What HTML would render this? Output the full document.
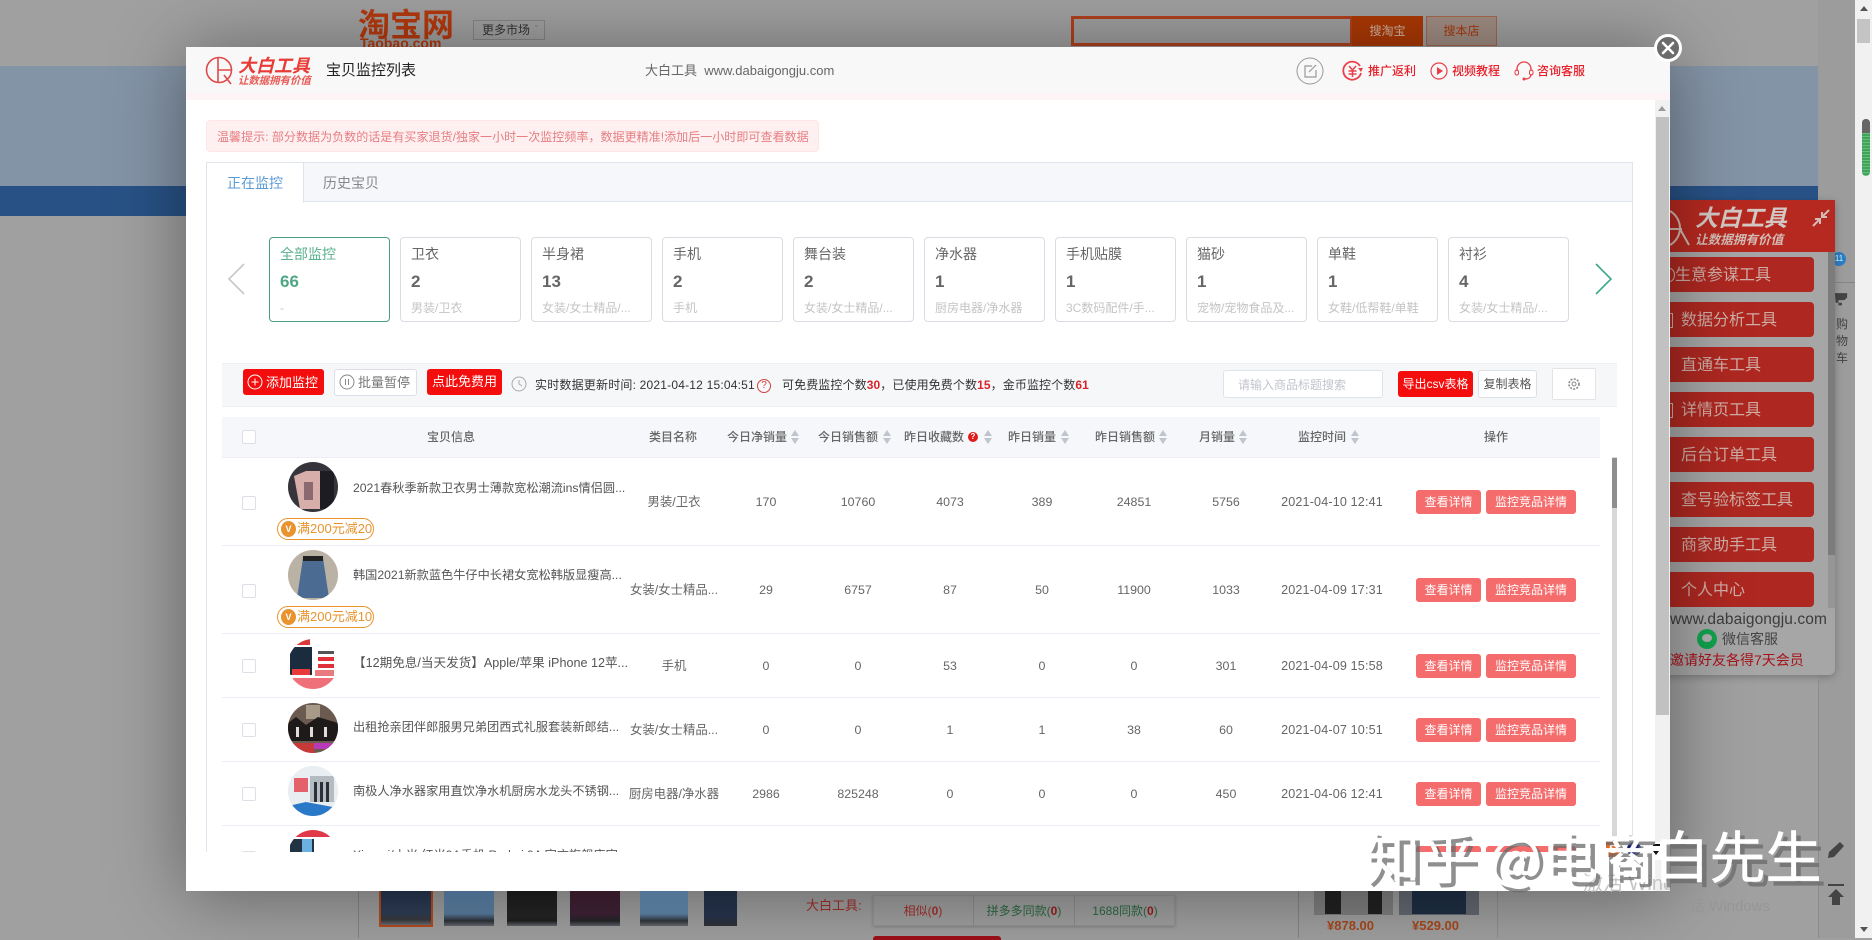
<!DOCTYPE html>
<html lang="zh-CN">
<head>
<meta charset="utf-8">
<title>宝贝监控列表</title>
<style>
*{box-sizing:border-box}
html,body{margin:0;padding:0;width:1872px;height:938px;overflow:hidden;background:#a0a0a0;font-family:"Liberation Sans","Noto Sans CJK SC",sans-serif;font-size:12px;color:#555}
div,span,svg{position:absolute;white-space:nowrap}
b{font-weight:700}
.card{top:237px;width:121px;height:85px;background:#fff;border:1px solid #d9dce2;border-radius:4px}
.card .n{left:10px;top:7px;font-size:14px;line-height:18px;color:#666}
.card .v{left:10px;top:33px;font-size:17px;line-height:22px;font-weight:700;color:#666}
.card .s{left:10px;top:62px;font-size:12px;line-height:17px;color:#c4c4c4}
.th{top:417px;height:40px;line-height:40px;font-size:12px;color:#666;text-align:center;font-weight:500}
.sort{width:8px;height:14px}
.r{left:222px;width:1378px;border-bottom:1px solid #ebeef5;background:#fff}
.cb{left:20px;width:14px;height:14px;border:1px solid #dcdfe6;background:#fff;border-radius:2px}
.img{left:66px;width:50px;height:50px;border-radius:50%;overflow:hidden;background:#eee}
.img svg{left:0;top:0}
.t{left:131px;font-size:12.200px;line-height:18px;color:#555}
.cell{text-align:center;color:#666;font-size:12.400px;line-height:18px;width:120px}
.c7{left:1020px;width:180px;font-size:12.600px;letter-spacing:.15px}
.b1,.b2{height:24px;line-height:24px;background:#f56c6c;color:#fff;border-radius:3px;text-align:center;font-size:12px}
.b1{left:1194px;width:65px}
.b2{left:1264px;width:90px}
.cp{left:55px;width:97px;height:22px;border:1px solid #e8932e;border-radius:11px;background:#fff;color:#e8932e;font-size:13px;line-height:20px;padding-left:19px}
.cp i{position:absolute;left:3px;top:2px;width:15px;height:16px;border-radius:50%;background:#e8932e;color:#fff;font-size:9px;line-height:16px;text-align:center;font-style:normal;font-weight:700}
.mb{left:1620px;width:194px;height:35px;background:#ae2821;border-radius:4px;color:#cfaea6;font-size:16px;line-height:37px}
.thumb{top:891px;height:35px;background:linear-gradient(180deg,#2f4260 0,#3a4a62 60%,#5f6570 100%)}
</style>
</head>
<body>
<!-- page behind -->
<div style="left:0;top:66px;width:1818px;height:120px;background:#8494a7"></div>
<div style="left:0;top:186px;width:1818px;height:30px;background:#285286"></div>
<div style="left:1818px;top:0;width:37px;height:938px;background:#9c9c9c"></div>
<div style="left:1855px;top:0;width:17px;height:938px;background:#f1f1f1"></div>
<div style="left:1857px;top:19px;width:13px;height:24px;background:#c4c4c4"></div>
<div style="left:1860px;top:6px;width:0;height:0;border:4px solid transparent;border-bottom:5px solid #555;border-top:0"></div>
<div style="left:1860px;top:927px;width:0;height:0;border:4px solid transparent;border-top:5px solid #555;border-bottom:0"></div>
<div style="left:1862px;top:119px;width:8px;height:57px;border-radius:4px;background:repeating-linear-gradient(180deg,#3fa55a 0,#3fa55a 2px,#69bb7f 2px,#69bb7f 3px)"></div>
<div style="left:1862px;top:119px;width:8px;height:14px;border-radius:4px 4px 0 0;background:#666"></div>

<!-- taobao header -->
<div style="left:358px;top:5px;font-size:32px;line-height:36px;font-weight:700;color:#b3390e;font-family:'Noto Sans CJK SC',sans-serif">淘宝网</div>
<div style="left:360px;top:36px;font-size:14px;line-height:14px;font-weight:700;color:#b3390e">Taobao.com</div>
<div style="left:473px;top:20px;width:72px;height:20px;border:1px solid #858585;color:#333;font-size:12px;line-height:18px;padding-left:8px">更多市场<span style="left:61px;top:-1px;font-size:9px;color:#666">ˇ</span></div>
<div style="left:1071px;top:16px;width:282px;height:30px;border:3px solid #b0401c;background:#9e9e9e"></div>
<div style="left:1352px;top:16px;width:71px;height:30px;background:#ab3804;color:#d4b8a6;text-align:center;line-height:30px">搜淘宝</div>
<div style="left:1426px;top:16px;width:71px;height:30px;background:#a08d83;border:1px solid #a5664b;color:#a8380c;text-align:center;line-height:28px">搜本店</div>

<!-- product page bottom -->
<div style="left:358px;top:891px;width:1px;height:47px;background:#858585"></div>
<div style="left:1298px;top:891px;width:1px;height:47px;background:#858585"></div>
<div style="left:1497px;top:891px;width:1px;height:47px;background:#8f8f8f"></div>
<div style="left:1818px;top:680px;width:1px;height:258px;background:#8d8d8d"></div>
<div class="thumb" style="left:379px;width:54px;height:36px;border:2px solid #b84a1c;border-top:0;background:linear-gradient(180deg,#26354f 0,#2f3e57 65%,#3a3a3e 85%,#6a6e76 100%)"></div>
<div class="thumb" style="left:444px;width:50px;background:linear-gradient(180deg,#5f88b2,#5a7ea0 65%,#2e3238 85%,#666a70)"></div>
<div class="thumb" style="left:507px;width:50px;background:linear-gradient(180deg,#1e1e1e,#252525 70%,#202020 85%,#63676c)"></div>
<div class="thumb" style="left:570px;width:50px;background:linear-gradient(180deg,#432033,#3f2236 65%,#252528 85%,#5f6168)"></div>
<div class="thumb" style="left:640px;width:48px;background:linear-gradient(180deg,#6a96c0,#6088ad 65%,#33373c 85%,#666a70)"></div>
<div class="thumb" style="left:704px;width:33px;background:linear-gradient(180deg,#24334b,#26354e 70%,#303236)"></div>
<div style="left:806px;top:897px;font-size:13px;line-height:18px;color:#a0302a">大白工具:</div>
<div style="left:873px;top:895px;width:302px;height:31px;border:1px solid #969696;background:#a0a0a0;box-shadow:0 1px 3px rgba(0,0,0,.2)"></div>
<div style="left:973px;top:895px;width:1px;height:31px;background:#8e8e8e"></div>
<div style="left:1074px;top:895px;width:1px;height:31px;background:#8e8e8e"></div>
<div style="left:873px;top:902px;width:100px;text-align:center;font-size:12px;line-height:18px;color:#a3302c">相似(<b>0</b>)</div>
<div style="left:974px;top:902px;width:100px;text-align:center;font-size:12px;line-height:18px;color:#2b6a42">拼多多同款(<b style="color:#9c1a1a">0</b>)</div>
<div style="left:1075px;top:902px;width:100px;text-align:center;font-size:12px;line-height:18px;color:#2b6a42">1688同款(<b style="color:#9c1a1a">0</b>)</div>
<div style="left:873px;top:936px;width:128px;height:4px;background:#a0101a;border-radius:3px 3px 0 0"></div>
<div style="left:1314px;top:891px;width:79px;height:24px;background:#808080"></div>
<div style="left:1325px;top:891px;width:16px;height:23px;background:#222"></div>
<div style="left:1368px;top:891px;width:14px;height:23px;background:#222"></div>
<div style="left:1399px;top:891px;width:80px;height:24px;background:#646a72"></div>
<div style="left:1412px;top:891px;width:54px;height:23px;background:#1f2f45"></div>
<div style="left:1327px;top:918px;font-size:13px;line-height:16px;font-weight:700;color:#a8481c">¥878.00</div>
<div style="left:1412px;top:918px;font-size:13px;line-height:16px;font-weight:700;color:#a8481c">¥529.00</div>

<!-- right side tools behind -->
<div style="left:1832px;top:252px;width:14px;height:14px;border-radius:50%;background:#2e7cc4;color:#cfe;font-size:8px;line-height:14px;text-align:center">11</div>
<div style="left:1835px;top:282px;width:20px;height:1px;background:#858585"></div>
<svg style="left:1834px;top:292px" width="14" height="18" viewBox="0 0 16 20"><path d="M1 1h14v5l-3 3H5v3H2z" fill="#444"/><rect x="5" y="12" width="4" height="3" fill="#444"/></svg>
<div style="left:1836px;top:316px;width:14px;font-size:12px;line-height:17px;white-space:normal;color:#444">购物车</div>
<svg style="left:1826px;top:840px" width="20" height="20" viewBox="0 0 20 20"><path d="M14 2l4 4-10 11-6 1 1-6z" fill="#444"/></svg>
<svg style="left:1827px;top:884px" width="18" height="22" viewBox="0 0 18 22"><rect x="1" y="0" width="16" height="2" fill="#444"/><path d="M9 5l8 8h-4v8H5v-8H1z" fill="#444"/></svg>

<!-- right tool panel -->
<div style="left:1600px;top:200px;width:235px;height:475px;background:#a6a6a6;border-radius:0 0 6px 0;box-shadow:0 2px 8px rgba(0,0,0,.25)"></div>
<div style="left:1828px;top:252px;width:7px;height:356px;background:#969696"></div>
<div style="left:1828px;top:252px;width:7px;height:303px;background:#7c7c7c"></div>
<div style="left:1600px;top:200px;width:235px;height:52px;background:#b62920"></div>
<div style="left:1695px;top:204px;font-size:23px;line-height:28px;font-weight:700;font-style:italic;color:#d2c8c4">大白工具</div>
<div style="left:1695px;top:232px;font-size:12.600px;line-height:16px;font-weight:700;font-style:italic;color:#d2bcb5">让数据拥有价值</div>
<svg style="left:1668px;top:205px" width="24" height="44" viewBox="0 0 24 44"><path d="M2 6a20 20 0 0 1 10 18 20 20 0 0 1-10 16M2 24h12M12 24l9 16" fill="none" stroke="#d2b8b0" stroke-width="2"/></svg>
<svg style="left:1811px;top:208px" width="20" height="20" viewBox="0 0 20 20"><path d="M18 2l-7 7M11 4v5h5M2 18l7-7M4 11h5v5" fill="none" stroke="#d2bcb6" stroke-width="2"/></svg>
<div class="mb" style="top:257px;padding-left:55px">生意参谋工具</div>
<div class="mb" style="top:302px;padding-left:61px">数据分析工具</div>
<div class="mb" style="top:347px;padding-left:61px">直通车工具</div>
<div class="mb" style="top:392px;padding-left:61px">详情页工具</div>
<div class="mb" style="top:437px;padding-left:61px">后台订单工具</div>
<div class="mb" style="top:482px;padding-left:61px">查号验标签工具</div>
<div class="mb" style="top:527px;padding-left:61px">商家助手工具</div>
<div class="mb" style="top:572px;padding-left:61px">个人中心</div>
<div style="left:1664px;top:268px;width:11px;height:14px;border:1.500px solid #cfaea6;border-radius:50%"></div>
<div style="left:1664px;top:313px;width:9px;height:15px;border:1.500px solid #cfaea6"></div>
<div style="left:1664px;top:403px;width:9px;height:15px;border:1.500px solid #cfaea6"></div>
<div style="left:1670px;top:610px;font-size:15.500px;line-height:20px;color:#3c3c3c;letter-spacing:.1px">www.dabaigongju.com</div>
<div style="left:1697px;top:629px;width:20px;height:20px;border-radius:50%;background:#12a24e"></div>
<div style="left:1702px;top:634px;width:10px;height:8px;border-radius:50%;background:#b0b0b0"></div>
<div style="left:1722px;top:629px;font-size:14px;line-height:20px;color:#444">微信客服</div>
<div style="left:1670px;top:650px;font-size:14px;line-height:20px;color:#a8121a">邀请好友各得7天会员</div>

<!-- modal -->
<div style="left:186px;top:47px;width:1484px;height:844px;background:#fff;box-shadow:0 4px 70px rgba(0,0,0,.4);overflow:hidden">
  <div style="left:0;top:0;width:1484px;height:46px;background:#f8f8f9"></div>
  <div style="left:0;top:46px;width:1484px;height:7px;background:#fef4f5"></div>
</div>
<!-- modal header -->
<svg style="left:205px;top:56px" width="34" height="30" viewBox="0 0 34 30"><circle cx="14" cy="14" r="12.500" fill="none" stroke="#df4a4a" stroke-width="1.600"/><path d="M13 2v24M13 14h14M19 19l7 9" fill="none" stroke="#df4a4a" stroke-width="1.600"/></svg>
<div style="left:238px;top:55px;font-size:18px;line-height:22px;font-weight:700;font-style:italic;color:#e93a35">大白工具</div>
<div style="left:238px;top:76px;font-size:10.400px;line-height:12px;font-weight:700;font-style:italic;color:#e85a55">让数据拥有价值</div>
<div style="left:326px;top:60px;font-size:15px;line-height:22px;color:#222">宝贝监控列表</div>
<div style="left:645px;top:61px;font-size:13px;line-height:20px;color:#666">大白工具 &nbsp;www.dabaigongju.com</div>
<svg style="left:1296px;top:57px" width="28" height="28" viewBox="0 0 28 28"><circle cx="14" cy="14" r="13" fill="none" stroke="#999"/><path d="M16 9H9v11h11v-7M13 15l7-7" fill="none" stroke="#999" stroke-width="1.200"/></svg>
<svg style="left:1342px;top:60px" width="22" height="22" viewBox="0 0 22 22"><path d="M19 13a9 9 0 1 1-1-7" fill="none" stroke="#e8404a" stroke-width="1.800"/><path d="M7 6l3.500 4L14 6M6.500 11h8M6.500 14h8M10.500 10v7" fill="none" stroke="#e8404a" stroke-width="1.500"/><path d="M16 8h5l-2 4z" fill="#e8404a"/></svg>
<div style="left:1368px;top:61px;font-size:12px;line-height:20px;font-weight:500;color:#e8202a">推广返利</div>
<svg style="left:1430px;top:62px" width="18" height="18" viewBox="0 0 18 18"><circle cx="9" cy="9" r="8" fill="none" stroke="#e8404a" stroke-width="1.200"/><path d="M7 5l6 4-6 4z" fill="#e8404a"/></svg>
<div style="left:1452px;top:61px;font-size:12px;line-height:20px;font-weight:500;color:#e8202a">视频教程</div>
<svg style="left:1514px;top:60px" width="20" height="22" viewBox="0 0 20 22"><path d="M3 11V9a7 7 0 0 1 14 0v2M17 14c0 3-2 5-6 5" fill="none" stroke="#e8404a" stroke-width="1.300"/><rect x="1" y="10" width="3.500" height="5" rx="1.700" fill="none" stroke="#e8404a"/><rect x="15.500" y="10" width="3.500" height="5" rx="1.700" fill="none" stroke="#e8404a"/><circle cx="10" cy="19" r="1.500" fill="#e8404a"/></svg>
<div style="left:1537px;top:61px;font-size:12px;line-height:20px;font-weight:500;color:#e8202a">咨询客服</div>
<!-- close -->
<div style="left:1654px;top:34px;width:28px;height:28px;border-radius:50%;background:#6b6b6b;border:3px solid #fff"></div>
<svg style="left:1654px;top:34px" width="28" height="28" viewBox="0 0 28 28"><path d="M9 9l10 10M19 9L9 19" stroke="#fff" stroke-width="2.600" stroke-linecap="round"/></svg>

<!-- modal scrollbar -->
<div style="left:1655px;top:100px;width:15px;height:791px;background:#f1f1f1"></div>
<div style="left:1656px;top:117px;width:13px;height:598px;background:#c1c1c1"></div>
<div style="left:1658px;top:106px;width:0;height:0;border:4px solid transparent;border-bottom:5px solid #9a9a9a;border-top:0"></div>

<!-- alert -->
<div style="left:206px;top:120px;width:613px;height:32px;background:#fef0f0;border:1px solid #fde6e6;border-radius:4px;color:#e67e82;font-size:12.050px;line-height:32px;padding-left:10px;overflow:hidden">温馨提示: 部分数据为负数的话是有买家退货/独家一小时一次监控频率，数据更精准!添加后一小时即可查看数据</div>

<!-- tabs box -->
<div style="left:206px;top:162px;width:1427px;height:690px;border:1px solid #dfe4ed;border-bottom:0;background:#fff"></div>
<div style="left:207px;top:163px;width:1425px;height:39px;background:#f5f7fa;border-bottom:1px solid #dfe4ed"></div>
<div style="left:207px;top:163px;width:97px;height:40px;background:#fff;border-right:1px solid #dfe4ed;color:#5a9bd5;font-size:14px;line-height:40px;text-align:center">正在监控</div>
<div style="left:323px;top:163px;color:#888;font-size:14px;line-height:40px">历史宝贝</div>

<!-- arrows -->
<svg style="left:226px;top:262px" width="22" height="34" viewBox="0 0 22 34"><path d="M18 2L3 17l15 15" fill="none" stroke="#c8c8cc" stroke-width="1.600"/></svg>
<svg style="left:1592px;top:262px" width="22" height="34" viewBox="0 0 22 34"><path d="M4 2l15 15L4 32" fill="none" stroke="#3fa88a" stroke-width="1.600"/></svg>

<!-- cards -->
<div class="card" style="left:269px;border-color:#4a9f84"><div class="n" style="color:#5bb08e">全部监控</div><div class="v" style="color:#4fa784">66</div><div class="s">-</div></div>
<div class="card" style="left:400px"><div class="n">卫衣</div><div class="v">2</div><div class="s">男装/卫衣</div></div>
<div class="card" style="left:531px"><div class="n">半身裙</div><div class="v">13</div><div class="s">女装/女士精品/...</div></div>
<div class="card" style="left:662px"><div class="n">手机</div><div class="v">2</div><div class="s">手机</div></div>
<div class="card" style="left:793px"><div class="n">舞台装</div><div class="v">2</div><div class="s">女装/女士精品/...</div></div>
<div class="card" style="left:924px"><div class="n">净水器</div><div class="v">1</div><div class="s">厨房电器/净水器</div></div>
<div class="card" style="left:1055px"><div class="n">手机贴膜</div><div class="v">1</div><div class="s">3C数码配件/手...</div></div>
<div class="card" style="left:1186px"><div class="n">猫砂</div><div class="v">1</div><div class="s">宠物/宠物食品及...</div></div>
<div class="card" style="left:1317px"><div class="n">单鞋</div><div class="v">1</div><div class="s">女鞋/低帮鞋/单鞋</div></div>
<div class="card" style="left:1448px"><div class="n">衬衫</div><div class="v">4</div><div class="s">女装/女士精品/...</div></div>

<!-- toolbar -->
<div style="left:222px;top:363px;width:1395px;height:44px;background:#f6f7f9;border-top:1px solid #eef0f3;border-bottom:1px solid #eef0f3"></div>
<div style="left:243px;top:369px;width:81px;height:26px;background:#f40d0d;border-radius:3px;color:#fff;font-size:13px;line-height:27px;padding-left:23px">添加监控</div>
<svg style="left:247px;top:374px" width="16" height="16" viewBox="0 0 16 16"><circle cx="8" cy="8" r="7" fill="none" stroke="#fff"/><path d="M8 4.500v7M4.500 8h7" stroke="#fff"/></svg>
<div style="left:334px;top:369px;width:83px;height:27px;background:#fff;border:1px solid #dcdfe6;border-radius:3px;color:#777;font-size:13px;line-height:26px;padding-left:23px">批量暂停</div>
<svg style="left:339px;top:374px" width="16" height="16" viewBox="0 0 16 16"><circle cx="8" cy="8" r="7" fill="none" stroke="#888"/><path d="M6.500 5v6M9.500 5v6" stroke="#888"/></svg>
<div style="left:427px;top:369px;width:75px;height:26px;background:#f40d0d;border-radius:3px;color:#fff;font-size:13px;line-height:26px;text-align:center">点此免费用</div>
<svg style="left:511px;top:376px" width="16" height="16" viewBox="0 0 16 16"><circle cx="8" cy="8" r="7" fill="none" stroke="#aaa"/><path d="M8 4v4l3 2" fill="none" stroke="#aaa"/></svg>
<div style="left:535px;top:376px;font-size:12px;line-height:18px;color:#333;letter-spacing:.2px">实时数据更新时间: 2021-04-12 15:04:51</div>
<div style="left:757px;top:379px;width:14px;height:14px;border:1px solid #d0433f;border-radius:50%;color:#d0433f;font-size:10px;line-height:12px;text-align:center">?</div>
<div style="left:782px;top:376px;font-size:12px;line-height:18px;color:#333;letter-spacing:.1px">可免费监控个数<b style="color:#d9232b">30</b>，已使用免费个数<b style="color:#d9232b">15</b>，金币监控个数<b style="color:#d9232b">61</b></div>
<div style="left:1223px;top:370px;width:160px;height:28px;background:#fff;border:1px solid #e0e3e8;border-radius:3px;color:#c0c4cc;font-size:12px;line-height:28px;padding-left:14px">请输入商品标题搜索</div>
<div style="left:1398px;top:371px;width:75px;height:26px;background:#f40d0d;border-radius:3px;color:#fff;font-size:12px;line-height:26px;text-align:center">导出csv表格</div>
<div style="left:1478px;top:370px;width:59px;height:28px;background:#fff;border:1px solid #dcdfe6;border-radius:3px;color:#555;font-size:12px;line-height:26px;text-align:center">复制表格</div>
<div style="left:1552px;top:368px;width:44px;height:32px;background:#fff;border:1px solid #e2e4e8;border-radius:2px"></div>
<svg style="left:1567px;top:377px" width="14" height="14" viewBox="0 0 14 14"><circle cx="7" cy="7" r="2" fill="none" stroke="#888"/><circle cx="7" cy="7" r="5" fill="none" stroke="#888" stroke-width="1.600" stroke-dasharray="2 1.300"/></svg>

<!-- table header -->
<div style="left:222px;top:417px;width:1378px;height:41px;background:#f5f7fa;border-bottom:1px solid #ebeef5"></div>
<div style="left:242px;top:430px;width:14px;height:14px;background:#fff;border:1px solid #dcdfe6;border-radius:2px"></div>
<div class="th" style="left:391px;width:120px">宝贝信息</div>
<div class="th" style="left:613px;width:120px">类目名称</div>
<div class="th" style="left:697px;width:120px">今日净销量</div>
<div class="th" style="left:788px;width:120px">今日销售额</div>
<div class="th" style="left:874px;width:120px">昨日收藏数</div>
<div class="th" style="left:972px;width:120px">昨日销量</div>
<div class="th" style="left:1065px;width:120px">昨日销售额</div>
<div class="th" style="left:1157px;width:120px">月销量</div>
<div class="th" style="left:1262px;width:120px">监控时间</div>
<div class="th" style="left:1436px;width:120px">操作</div>
<div style="left:968px;top:432px;width:10px;height:10px;border-radius:50%;background:#e01b1b;color:#fff;font-size:8px;line-height:10px;text-align:center;font-weight:700">?</div>
<svg class="sort" style="left:791px;top:430px" viewBox="0 0 8 14"><path d="M4 0l4 6H0zM4 14L0 8h8z" fill="#c0c4cc"/></svg>
<svg class="sort" style="left:883px;top:430px" viewBox="0 0 8 14"><path d="M4 0l4 6H0zM4 14L0 8h8z" fill="#c0c4cc"/></svg>
<svg class="sort" style="left:984px;top:430px" viewBox="0 0 8 14"><path d="M4 0l4 6H0zM4 14L0 8h8z" fill="#c0c4cc"/></svg>
<svg class="sort" style="left:1061px;top:430px" viewBox="0 0 8 14"><path d="M4 0l4 6H0zM4 14L0 8h8z" fill="#c0c4cc"/></svg>
<svg class="sort" style="left:1159px;top:430px" viewBox="0 0 8 14"><path d="M4 0l4 6H0zM4 14L0 8h8z" fill="#c0c4cc"/></svg>
<svg class="sort" style="left:1239px;top:430px" viewBox="0 0 8 14"><path d="M4 0l4 6H0zM4 14L0 8h8z" fill="#c0c4cc"/></svg>
<svg class="sort" style="left:1351px;top:430px" viewBox="0 0 8 14"><path d="M4 0l4 6H0zM4 14L0 8h8z" fill="#c0c4cc"/></svg>

<!-- table body -->
<div style="left:222px;top:458px;width:1390px;height:394px;overflow:hidden">
  <div class="r" style="left:0;top:0;height:88px">
    <div class="cb" style="top:38px"></div>
    <div class="img" style="top:4px"><svg width="50" height="50" viewBox="0 0 50 50"><rect width="50" height="50" fill="#35353b"/><path d="M6 14l12-5h14v38H12z" fill="#d8aeaa"/><rect x="16" y="20" width="9" height="18" fill="#8a6a70"/><path d="M32 9h14v38H32z" fill="#1c1c22"/></svg></div>
    <div class="t" style="top:21px">2021春秋季新款卫衣男士薄款宽松潮流ins情侣圆...</div>
    <div class="cp" style="top:60px"><i>V</i>满200元减20</div>
    <div class="cell" style="top:35px;left:392px">男装/卫衣</div>
    <div class="cell" style="top:35px;left:484px">170</div><div class="cell" style="top:35px;left:576px">10760</div><div class="cell" style="top:35px;left:668px">4073</div><div class="cell" style="top:35px;left:760px">389</div><div class="cell" style="top:35px;left:852px">24851</div><div class="cell" style="top:35px;left:944px">5756</div><div class="cell c7" style="top:35px">2021-04-10 12:41</div>
    <div class="b1" style="top:32px">查看详情</div><div class="b2" style="top:32px">监控竞品详情</div>
  </div>
  <div class="r" style="left:0;top:88px;height:88px">
    <div class="cb" style="top:38px"></div>
    <div class="img" style="top:4px"><svg width="50" height="50" viewBox="0 0 50 50"><rect width="50" height="50" fill="#b9b2a5"/><path d="M15 8h20l6 40H9z" fill="#4b6b92"/><rect x="15" y="6" width="20" height="5" fill="#222"/></svg></div>
    <div class="t" style="top:20px">韩国2021新款蓝色牛仔中长裙女宽松韩版显瘦高...</div>
    <div class="cp" style="top:60px"><i>V</i>满200元减10</div>
    <div class="cell" style="top:35px;left:392px">女装/女士精品...</div>
    <div class="cell" style="top:35px;left:484px">29</div><div class="cell" style="top:35px;left:576px">6757</div><div class="cell" style="top:35px;left:668px">87</div><div class="cell" style="top:35px;left:760px">50</div><div class="cell" style="top:35px;left:852px">11900</div><div class="cell" style="top:35px;left:944px">1033</div><div class="cell c7" style="top:35px">2021-04-09 17:31</div>
    <div class="b1" style="top:32px">查看详情</div><div class="b2" style="top:32px">监控竞品详情</div>
  </div>
  <div class="r" style="left:0;top:176px;height:64px">
    <div class="cb" style="top:25px"></div>
    <div class="img" style="top:5px"><svg width="50" height="50" viewBox="0 0 50 50"><rect width="50" height="50" fill="#fff"/><rect x="2" y="8" width="22" height="28" fill="#1a2c3e"/><path d="M2 0h20v6H2z" fill="#d83a3a"/><rect x="30" y="12" width="16" height="3" fill="#555"/><rect x="30" y="18" width="16" height="4" fill="#e0303a"/><rect x="30" y="25" width="16" height="4" fill="#e0303a"/><rect x="27" y="31" width="19" height="6" fill="#e87a80"/><rect x="4" y="30" width="18" height="6" fill="#e83a3a"/><rect x="0" y="39" width="50" height="11" fill="#ef7078"/></svg></div>
    <div class="t" style="top:20px;font-size:12.600px">【12期免息/当天发货】Apple/苹果 iPhone 12苹...</div>
    <div class="cell" style="top:23px;left:392px">手机</div>
    <div class="cell" style="top:23px;left:484px">0</div><div class="cell" style="top:23px;left:576px">0</div><div class="cell" style="top:23px;left:668px">53</div><div class="cell" style="top:23px;left:760px">0</div><div class="cell" style="top:23px;left:852px">0</div><div class="cell" style="top:23px;left:944px">301</div><div class="cell c7" style="top:23px">2021-04-09 15:58</div>
    <div class="b1" style="top:20px">查看详情</div><div class="b2" style="top:20px">监控竞品详情</div>
  </div>
  <div class="r" style="left:0;top:240px;height:64px">
    <div class="cb" style="top:25px"></div>
    <div class="img" style="top:5px"><svg width="50" height="50" viewBox="0 0 50 50"><rect width="50" height="50" fill="#6a5a50"/><rect x="18" y="2" width="14" height="14" fill="#a89a88"/><path d="M0 20l8-6 10 8 12-8 20 6v18H0z" fill="#1e1a1a"/><rect x="8" y="24" width="3" height="10" fill="#ddd"/><rect x="22" y="24" width="3" height="10" fill="#ddd"/><rect x="36" y="24" width="3" height="10" fill="#ddd"/><rect x="0" y="40" width="26" height="10" fill="#c83a3a"/><rect x="26" y="40" width="24" height="6" fill="#b83ab8"/></svg></div>
    <div class="t" style="top:20px">出租抢亲团伴郎服男兄弟团西式礼服套装新郎结...</div>
    <div class="cell" style="top:23px;left:392px">女装/女士精品...</div>
    <div class="cell" style="top:23px;left:484px">0</div><div class="cell" style="top:23px;left:576px">0</div><div class="cell" style="top:23px;left:668px">1</div><div class="cell" style="top:23px;left:760px">1</div><div class="cell" style="top:23px;left:852px">38</div><div class="cell" style="top:23px;left:944px">60</div><div class="cell c7" style="top:23px">2021-04-07 10:51</div>
    <div class="b1" style="top:20px">查看详情</div><div class="b2" style="top:20px">监控竞品详情</div>
  </div>
  <div class="r" style="left:0;top:304px;height:64px">
    <div class="cb" style="top:25px"></div>
    <div class="img" style="top:4px"><svg width="50" height="50" viewBox="0 0 50 50"><rect width="50" height="50" fill="#e8eef2"/><rect x="6" y="12" width="14" height="14" fill="#e4606a"/><rect x="22" y="10" width="24" height="26" fill="#b4bcc2"/><rect x="26" y="16" width="3" height="20" fill="#2a3038"/><rect x="32" y="16" width="3" height="20" fill="#2a3038"/><rect x="38" y="16" width="3" height="20" fill="#2a3038"/><path d="M0 40l18-4 32 6v8H0z" fill="#2a78c8"/></svg></div>
    <div class="t" style="top:20px">南极人净水器家用直饮净水机厨房水龙头不锈钢...</div>
    <div class="cell" style="top:23px;left:392px">厨房电器/净水器</div>
    <div class="cell" style="top:23px;left:484px">2986</div><div class="cell" style="top:23px;left:576px">825248</div><div class="cell" style="top:23px;left:668px">0</div><div class="cell" style="top:23px;left:760px">0</div><div class="cell" style="top:23px;left:852px">0</div><div class="cell" style="top:23px;left:944px">450</div><div class="cell c7" style="top:23px">2021-04-06 12:41</div>
    <div class="b1" style="top:20px">查看详情</div><div class="b2" style="top:20px">监控竞品详情</div>
  </div>
  <div class="r" style="left:0;top:368px;height:64px;border:0">
    <div class="cb" style="top:25px"></div>
    <div class="img" style="top:4px"><svg width="50" height="50" viewBox="0 0 50 50"><rect width="50" height="50" fill="#fff"/><rect width="50" height="7" fill="#e03a4a"/><rect x="2" y="9" width="24" height="30" fill="#234"/><rect x="14" y="9" width="10" height="30" fill="#6ab0e0"/></svg></div>
    <div class="t" style="top:20px">Xiaomi/小米 红米9A手机 Redmi 9A 官方旗舰店官...</div>
    <div class="b1" style="top:20px">查看详情</div><div class="b2" style="top:20px">监控竞品详情</div>
  </div>
</div>
<!-- table scrollbar -->
<div style="left:1612px;top:457px;width:5px;height:395px;background:#d8d8d8"></div>
<div style="left:1612px;top:458px;width:5px;height:50px;background:#8e8e8e"></div>

<!-- win activate / IME -->
<div style="left:1583px;top:870px;width:87px;height:28px;overflow:hidden;font-size:20px;line-height:28px;color:#c4c4c4">激活 Windows</div>
<div style="left:1690px;top:897px;font-size:15px;line-height:20px;color:#969696">活 Windows</div>
<div style="left:1605px;top:842px;width:65px;height:18px;background:#fff"></div>
<div style="left:1606px;top:842px;width:14px;height:15px;background:#e06a2a;color:#fff;font-size:12px;line-height:15px;font-weight:700;text-align:center">S</div>
<div style="left:1627px;top:842px;width:14px;height:14px;border-radius:50%;background:#16227a;color:#fff;font-size:10px;line-height:14px;text-align:center;font-weight:700">?</div>
<div style="left:1653px;top:844px;width:7px;height:2px;background:#111"></div>
<div style="left:1653px;top:851px;width:0;height:0;border:3px solid transparent;border-top:4px solid #111;border-bottom:0"></div>

<!-- watermark -->
<div style="left:1364px;top:817px;font-family:'Noto Sans CJK SC',sans-serif;font-size:56px;line-height:76px;color:#fff;text-shadow:5px 5px 0 rgba(105,105,105,.75);-webkit-text-stroke:.5px #fff">知乎 @电商白先生</div>
</body>
</html>
